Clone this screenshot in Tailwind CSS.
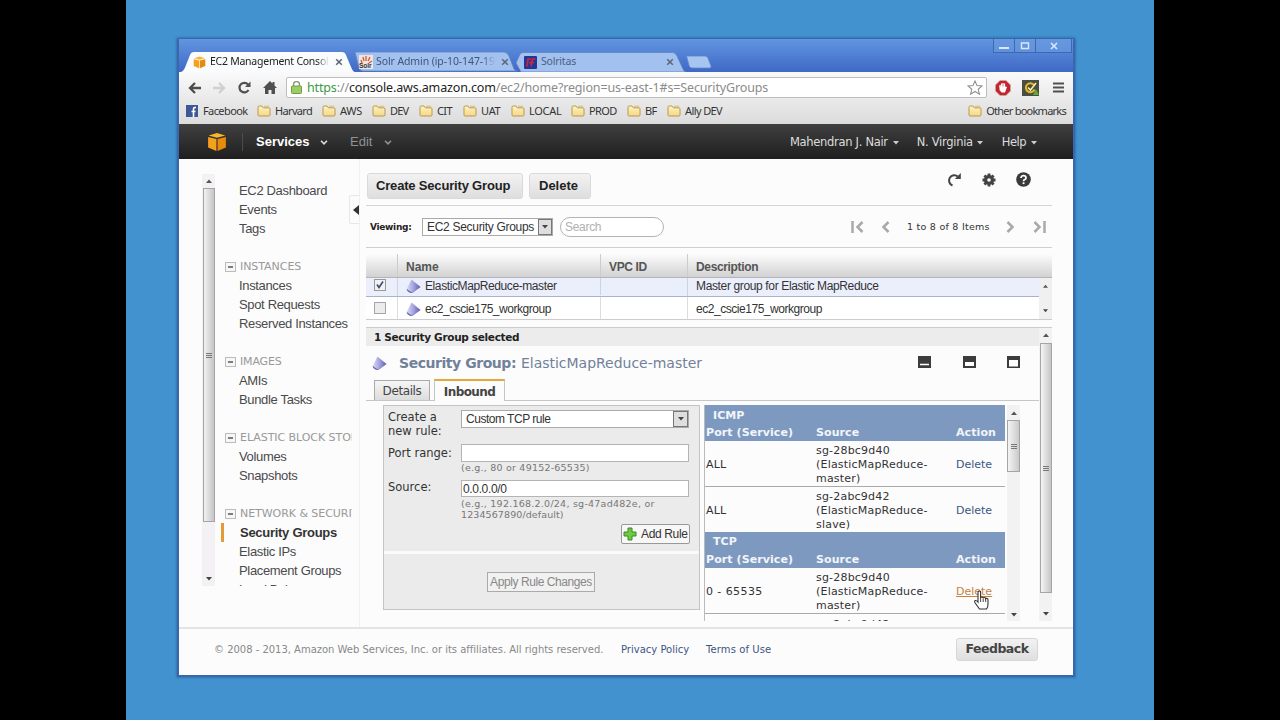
<!DOCTYPE html>
<html lang="en">
<head>
  <meta charset="UTF-8" />
  <meta name="viewport" content="width=device-width, initial-scale=1.0"/>
  <title>EC2 Management Console</title>
  <script src="https://cdn.jsdelivr.net/npm/@tailwindcss/browser@4"></script>
</head>
<body class="bg-black h-[720px] overflow-hidden flex justify-center font-['DejaVu_Sans',sans-serif] text-[#333]">

  <!-- shared icons -->
  <svg class="absolute w-0 h-0">
    <defs>
      <linearGradient id="cone-fill" x1="0" y1="0" x2="1" y2="0">
        <stop offset="0" stop-color="#dcdcf6"/><stop offset="0.5" stop-color="#a3a1dc"/><stop offset="1" stop-color="#5c5aac"/>
      </linearGradient>
      <linearGradient id="folder-fill" x1="0" y1="0" x2="0" y2="1">
        <stop offset="0" stop-color="#fdf3c0"/><stop offset="1" stop-color="#f3d88a"/>
      </linearGradient>
    </defs>
    <symbol id="folder" viewBox="0 0 14 12">
      <path d="M1 2.2Q1 1 2.2 1H5l1.4 1.8h5.4q1.2 0 1.2 1.2v6q0 1-1.2 1H2.2Q1 11 1 10z" fill="url(#folder-fill)" stroke="#bb984e" stroke-width="1"/>
      <path d="M7 1.2h5.2" stroke="#d8bd7c" stroke-width="1"/>
    </symbol>
    <symbol id="cone" viewBox="0 0 15 15">
      <path d="M5.5 .6 14.6 8 6 14Q1.2 13.4.7 10z" fill="url(#cone-fill)"/>
      <path d="M.7 10Q3.6 12 6 14 1.200 13.400.7 10z" fill="#6765b2"/>
      <path d="M.7 10Q2.400 12.600 6 13.200L14.600 8 6 14Q1.200 13.400.7 10z" fill="#7270ba"/>
    </symbol>
    <symbol id="cube" viewBox="0 0 18 18">
      <path d="M1 4.500 8.500 6.200V17L1 14z" fill="#f5a11c"/>
      <path d="M17 4.500 9.500 6.200V17L17 14z" fill="#e88b0c"/>
      <path d="M1.500 3.200 9 .8l7.500 2.400L9 5.200z" fill="#fbb62f"/>
    </symbol>
    <symbol id="minus" viewBox="0 0 11 10">
      <rect x=".5" y=".5" width="10" height="9" fill="#f6f6f6" stroke="#bbb"/>
      <path d="M3 5h5" stroke="#555" stroke-width="1.500"/>
    </symbol>
    <symbol id="up" viewBox="0 0 6 4"><path d="M0 4 3 .5 6 4z" fill="#555"/></symbol>
    <symbol id="down" viewBox="0 0 6 4"><path d="M0 0h6L3 3.500z" fill="#444"/></symbol>
    <symbol id="close" viewBox="0 0 8 8"><path d="M1.200 1.200 6.800 6.800M6.800 1.200 1.200 6.800" stroke="#5b6577" stroke-width="1.500"/></symbol>
    <symbol id="chevron" viewBox="0 0 8 5"><path d="M1 .8 4 3.800 7 .8" fill="none" stroke="currentColor" stroke-width="1.600"/></symbol>
    <symbol id="grip" viewBox="0 0 6 7"><path d="M0 1.500h6M0 3.500h6M0 5.500h6" stroke="#777" stroke-width="1"/></symbol>
  </svg>

  <div class="w-[1028px] h-[720px] bg-[#4292cf] pl-[51px] pt-[38px]">
    <!-- browser window -->
    <div class="w-[898px] h-[639px] border-x-2 border-b-2 border-t border-[#3a66ac] bg-[#fcfcfd] flex flex-col rounded-t-xs shadow-[0_0_2px_1px_#3577b5]">

      <!-- title bar with tabs -->
      <div class="relative h-[33px] shrink-0 bg-linear-to-b from-[#6196e0] to-[#4068c6] flex items-end pl-[2px]">
        <div class="relative w-[174px] h-[20px] flex items-center pl-[12px]">
          <svg class="absolute inset-0 w-[174px] h-[20px]" viewBox="0 0 174 20"><path d="M0 20Q3 19 5 13L9 3Q10 0 13 0H161Q164 0 165 3L170 15Q172 20 174 20z" fill="#fafbfc"/></svg>
          <svg class="relative w-[13px] h-[13px] shrink-0"><use href="#cube"/></svg>
          <span class="relative ml-[4px] w-[119px] overflow-hidden whitespace-nowrap text-[10.500px] font-['Noto_Sans',sans-serif] text-[#222] tracking-[-0.25px] mask-r-from-90%">EC2 Management Console</span>
          <svg class="relative ml-[6px] w-[8px] h-[8px]"><use href="#close"/></svg>
        </div>
        <div class="relative w-[160px] h-[20px] flex items-center pl-[4px]">
          <svg class="absolute -left-[2px] top-0 w-[166px] h-[20px]" viewBox="0 0 166 20"><path d="M2 0H151Q154 0 156 4L161 17Q162 19 164 19H10Q7 19 6 16z" fill="#a3c1ee" stroke="#5f83bd" stroke-width=".8"/></svg>
          <svg class="relative w-[14px] h-[14px] shrink-0" viewBox="0 0 14 14">
            <rect width="14" height="14" fill="#eee6e2"/>
            <path d="M3 8 2 5M5 6 4 2M7 6V1M9 6l2-4M10 8l3-2" stroke="#e0552b" stroke-width="1.300"/>
            <text x="0" y="12.500" font-size="6.500" font-weight="bold" font-family="Liberation Sans" fill="#333">Solr</text>
          </svg>
          <span class="relative ml-[3px] w-[119px] overflow-hidden whitespace-nowrap text-[10.500px] font-['Noto_Sans',sans-serif] text-[#3f5579] tracking-[-0.1px] mask-r-from-90%">Solr Admin (ip-10-147-19</span>
          <svg class="relative ml-[6px] w-[8px] h-[8px]"><use href="#close"/></svg>
        </div>
        <div class="relative w-[172px] h-[20px] flex items-center pl-[9px]">
          <svg class="absolute left-0 top-0 w-[172px] h-[20px]" viewBox="0 0 172 20"><path d="M1 11 5 2Q6 .4 9 .4H157Q160 0 162 4L168 17Q169 20 171 20H6z" fill="#a3c1ee" stroke="#5f83bd" stroke-width=".8"/></svg>
          <svg class="relative w-[13px] h-[13px] shrink-0" viewBox="0 0 13 13"><rect width="13" height="13" rx="1" fill="#22369c"/><path d="M4 2.500 3 10.500M4 3h3M8.500 2.500 7 10.500M8.500 3h3M5 6.500h5" stroke="#d3262e" stroke-width="1.600"/></svg>
          <span class="relative ml-[4px] w-[118px] text-[10.500px] font-['Noto_Sans',sans-serif] text-[#4a5f83] tracking-[-0.2px]">Solritas</span>
          <svg class="relative ml-[7px] w-[8px] h-[8px]"><use href="#close"/></svg>
        </div>
        <svg class="-ml-[2px] mb-[3px] w-[27px] h-[14px]" viewBox="0 0 27 14"><path d="M1.500 1H20Q22 1 23 3l3 8q.5 2-1.500 2H7Q5 13 4.200 11z" fill="#a6c5f0" stroke="#5f85c9" stroke-width=".8"/></svg>
        <!-- window buttons -->
        <div class="absolute right-[1px] top-0 flex h-[14px] border border-t-0 border-[#3d68b4] bg-[#6a9be0]/60 text-[#dbe8fb]">
          <div class="w-[21px] border-r border-[#3d68b4] flex justify-center items-center"><svg class="w-[10px] h-[8px]" viewBox="0 0 10 8"><path d="M0 6h10" stroke="currentColor" stroke-width="2"/></svg></div>
          <div class="w-[21px] border-r border-[#3d68b4] flex justify-center items-center"><svg class="w-[10px] h-[8px]" viewBox="0 0 10 8"><path d="M1.500 1h7v5.500h-7z" fill="none" stroke="currentColor" stroke-width="1.400"/></svg></div>
          <div class="w-[35px] flex justify-center items-center"><svg class="w-[8px] h-[8px]" viewBox="0 0 8 8"><path d="M1 1 7 7M7 1 1 7" stroke="currentColor" stroke-width="1.600"/></svg></div>
        </div>
      </div>

      <!-- toolbar -->
      <div class="h-[28px] shrink-0 bg-linear-to-b from-[#fafafa] to-[#e9e9ea] flex items-center pt-[3px] pl-[9px]">
        <svg class="w-[13px] h-[12px]" viewBox="0 0 13 12"><path d="M7 1 2 6l5 5M2 6h11" fill="none" stroke="#4c4c4c" stroke-width="2.300"/></svg>
        <svg class="w-[13px] h-[12px] ml-[12px]" viewBox="0 0 13 12"><path d="M6 1l5 5-5 5M11 6H0" fill="none" stroke="#d0d0d0" stroke-width="2.300"/></svg>
        <svg class="w-[13px] h-[13px] ml-[12px]" viewBox="0 0 13 13"><path d="M10.500 9A4.800 4.800 0 1 1 10 3.500" fill="none" stroke="#505050" stroke-width="2.200"/><path d="M12.500.500V6H7z" fill="#505050"/></svg>
        <svg class="w-[14px] h-[13px] ml-[12px]" viewBox="0 0 14 13"><path d="M7 0 0 7h2v6h3.500V9h3v4H12V7h2l-2.500-2.500V1h-2v1.500z" fill="#505050"/></svg>
        <div class="ml-[9px] w-[701px] h-[21px] bg-white border border-[#bdbdbd] rounded-xs flex items-center">
          <svg class="w-[11px] h-[13px] ml-[4px]" viewBox="0 0 11 13"><path d="M2.500 6V3.500a3 3 0 0 1 6 0V6" fill="none" stroke="#8d9b84" stroke-width="1.500"/><rect x=".5" y="5" width="10" height="7.500" rx="1" fill="#9ccc66" stroke="#6ca03e"/></svg>
          <span class="ml-[5px] text-[12.500px] leading-[18px] whitespace-nowrap font-['Noto_Sans',sans-serif] text-[#8b8b8b] tracking-[-0.15px]"><span class="text-[#3a9a42]">https</span>://<span class="text-[#222]">console.aws.amazon.com</span>/ec2/home?region=us-east-1#s=SecurityGroups</span>
          <svg class="w-[16px] h-[15px] ml-auto mr-[3px]" viewBox="0 0 16 15"><path d="M8 1l2 4.600 5 .4-3.800 3.300 1.200 4.800L8 11.500l-4.400 2.600 1.200-4.800L1 6l5-.4z" fill="#fff" stroke="#8f8f8f" stroke-width="1.100"/></svg>
        </div>
        <svg class="w-[16px] h-[16px] ml-[8px]" viewBox="0 0 16 16"><path d="M5 .5h6L15.500 5v6L11 15.500H5L.5 11V5z" fill="#c4242b" stroke="#c9a5a5" stroke-width=".8"/><path d="M5 7.500V5M6.500 7V3.500M8 7V3M9.500 7V3.500" stroke="#fff" stroke-width="1.200"/><path d="M4.500 6.500h6L12 7l-2 5.500H6.500L4.500 10z" fill="#fff"/></svg>
        <svg class="w-[17px] h-[16px] ml-[11px]" viewBox="0 0 17 16"><rect width="17" height="16" fill="#4b4d40"/><path d="M12 5A4.500 4.500 0 1 0 12.500 9.500" fill="none" stroke="#e5b92c" stroke-width="2"/><path d="M6 7.500 8.500 10 14 3" fill="none" stroke="#fff2b0" stroke-width="1.500"/><path d="M11 15l3-6 3 6z" fill="#5cab3f"/></svg>
        <svg class="w-[11px] h-[11px] ml-[14px]" viewBox="0 0 11 11"><path d="M0 1.500h11M0 5.500h11M0 9.500h11" stroke="#505050" stroke-width="2"/></svg>
      </div>

      <!-- bookmarks bar -->
      <div class="h-[24px] shrink-0 bg-linear-to-b from-[#e9e9ea] to-[#dcdcdd] flex items-center pl-[7px] pb-[2px] text-[11px] font-['Noto_Sans',sans-serif] text-[#333] whitespace-nowrap">
        <div class="w-[71px] flex items-center gap-[5px]"><svg class="w-[12px] h-[12px]" viewBox="0 0 12 12"><rect width="12" height="12" fill="#3e5796"/><path d="M10 2.500H8.800Q7.500 2.500 7.500 4v8M5.500 6.500h4" fill="none" stroke="#fff" stroke-width="1.600"/></svg><span class="tracking-[-0.6px]">Facebook</span></div>
        <div class="w-[65px] flex items-center gap-[4px]"><svg class="w-[14px] h-[12px]"><use href="#folder"/></svg><span class="tracking-[-0.65px]">Harvard</span></div>
        <div class="w-[50px] flex items-center gap-[4px]"><svg class="w-[14px] h-[12px]"><use href="#folder"/></svg><span class="tracking-[-0.3px]">AWS</span></div>
        <div class="w-[47px] flex items-center gap-[4px]"><svg class="w-[14px] h-[12px]"><use href="#folder"/></svg><span class="tracking-[-0.8px]">DEV</span></div>
        <div class="w-[44px] flex items-center gap-[4px]"><svg class="w-[14px] h-[12px]"><use href="#folder"/></svg><span class="tracking-[-0.6px]">CIT</span></div>
        <div class="w-[48px] flex items-center gap-[4px]"><svg class="w-[14px] h-[12px]"><use href="#folder"/></svg><span class="tracking-[-0.3px]">UAT</span></div>
        <div class="w-[60px] flex items-center gap-[4px]"><svg class="w-[14px] h-[12px]"><use href="#folder"/></svg><span class="tracking-[-0.3px]">LOCAL</span></div>
        <div class="w-[56px] flex items-center gap-[4px]"><svg class="w-[14px] h-[12px]"><use href="#folder"/></svg><span class="tracking-[-0.6px]">PROD</span></div>
        <div class="w-[40px] flex items-center gap-[4px]"><svg class="w-[14px] h-[12px]"><use href="#folder"/></svg><span class="tracking-[-0.6px]">BF</span></div>
        <div class="flex items-center gap-[4px]"><svg class="w-[14px] h-[12px]"><use href="#folder"/></svg><span class="tracking-[-0.6px]">Ally DEV</span></div>
        <div class="ml-auto mr-[7px] flex items-center gap-[4px]"><svg class="w-[14px] h-[12px]"><use href="#folder"/></svg><span class="tracking-[-0.75px]">Other bookmarks</span></div>
      </div>

      <!-- console navigation -->
      <div class="h-[35px] shrink-0 bg-linear-to-b from-[#404040] to-[#1f1f1f] flex items-center text-[#ddd] whitespace-nowrap">
        <svg class="w-[20px] h-[20px] ml-[28px]"><use href="#cube"/></svg>
        <div class="ml-[15px] w-px h-[18px] bg-[#4c4c4c]"></div>
        <span class="ml-[13px] w-[64px] text-[13px] font-bold font-['Liberation_Sans',sans-serif] text-white">Services</span>
        <svg class="w-[8px] h-[5px] mt-[2px]"><use href="#chevron"/></svg>
        <span class="ml-[22px] w-[34px] pt-px text-[13px] font-['Liberation_Sans',sans-serif] text-[#929292]">Edit</span>
        <svg class="w-[8px] h-[5px] mt-[2px] text-[#929292]"><use href="#chevron"/></svg>
        <div class="ml-auto mr-[36px] pt-[3px] flex items-center text-[11.500px]">
          <span class="tracking-[-0.3px]">Mahendran J. Nair</span><svg class="w-[6px] h-[4px] ml-[5px]" viewBox="0 0 6 4"><path d="M0 0h6L3 3.500z" fill="#ccc"/></svg>
          <span class="ml-[18px] tracking-[-0.3px]">N. Virginia</span><svg class="w-[6px] h-[4px] ml-[4px]" viewBox="0 0 6 4"><path d="M0 0h6L3 3.500z" fill="#ccc"/></svg>
          <span class="ml-[19px] tracking-[-0.5px]">Help</span><svg class="w-[6px] h-[4px] ml-[5px]" viewBox="0 0 6 4"><path d="M0 0h6L3 3.500z" fill="#ccc"/></svg>
        </div>
      </div>

      <!-- page -->
      <div class="h-[470px] shrink-0 flex border-b-2 border-[#e4e4e4]">

        <!-- sidebar -->
        <div class="w-[181px] border-r border-[#f0f0f0] flex pl-[23px] pt-[15px] relative">
          <div class="w-[13px] h-[412px] bg-[#f3f1f3] flex flex-col items-center">
            <svg class="w-[6px] h-[4px] my-[5px]"><use href="#up"/></svg>
            <div class="w-[12px] h-[334px] border border-[#a5a3a5] bg-linear-to-r from-[#f2f2f2] to-[#c6c4c6] flex items-center justify-center"><svg class="w-[6px] h-[7px]"><use href="#grip"/></svg></div>
            <svg class="w-[6px] h-[4px] mt-auto mb-[5px]"><use href="#down"/></svg>
          </div>
          <div class="ml-[6px] w-[131px] h-[412px] pt-[7px] overflow-hidden whitespace-nowrap font-['Liberation_Sans',sans-serif] text-[13px] leading-[19px] text-[#4a4a4a] tracking-[-0.34px]">
            <div class="pl-[18px]">EC2 Dashboard</div>
            <div class="pl-[18px]">Events</div>
            <div class="pl-[18px]">Tags</div>
            <div class="mt-[19px] flex items-center gap-[4px] text-[11px] font-['DejaVu_Sans',sans-serif] text-[#999] tracking-[-0.05px]"><svg class="w-[11px] h-[10px] ml-[4px] shrink-0"><use href="#minus"/></svg>INSTANCES</div>
            <div class="pl-[18px]">Instances</div>
            <div class="pl-[18px]">Spot Requests</div>
            <div class="pl-[18px]">Reserved Instances</div>
            <div class="mt-[19px] flex items-center gap-[4px] text-[11px] font-['DejaVu_Sans',sans-serif] text-[#999] tracking-[-0.15px]"><svg class="w-[11px] h-[10px] ml-[4px] shrink-0"><use href="#minus"/></svg>IMAGES</div>
            <div class="pl-[18px]">AMIs</div>
            <div class="pl-[18px]">Bundle Tasks</div>
            <div class="mt-[19px] flex items-center gap-[4px] text-[11px] font-['DejaVu_Sans',sans-serif] text-[#999] tracking-[-0.05px]"><svg class="w-[11px] h-[10px] ml-[4px] shrink-0"><use href="#minus"/></svg>ELASTIC BLOCK STORE</div>
            <div class="pl-[18px]">Volumes</div>
            <div class="pl-[18px]">Snapshots</div>
            <div class="mt-[19px] flex items-center gap-[4px] text-[11px] font-['DejaVu_Sans',sans-serif] text-[#999] tracking-[-0.05px]"><svg class="w-[11px] h-[10px] ml-[4px] shrink-0"><use href="#minus"/></svg>NETWORK &amp; SECURITY</div>
            <div class="border-l-3 border-[#e39b3a] pl-[16px] font-bold text-[#333] tracking-[-0.28px]">Security Groups</div>
            <div class="pl-[18px]">Elastic IPs</div>
            <div class="pl-[18px]">Placement Groups</div>
            <div class="pl-[18px]">Load Balancers</div>
          </div>
          <!-- collapse handle -->
          <div class="absolute right-[0px] top-[36px] w-[10px] h-[29px] bg-[#fcfcfd] border border-r-0 border-[#e8e8e8] rounded-l-xs flex items-center justify-end"><svg class="w-[6px] h-[10px]" viewBox="0 0 6 10"><path d="M6 0v10L0 5z" fill="#333"/></svg></div>
        </div>

        <!-- main column -->
        <div class="ml-[6px] w-[686px] h-[462px] flex flex-col overflow-hidden">
          <div class="h-[47px] shrink-0 border-b border-[#d4d4d4] flex items-center pt-[7px] pl-px">
            <div class="w-[156px] h-[26px] rounded-[3px] border border-[#dadada] bg-linear-to-b from-[#f2f2f2] to-[#dedede] flex items-center pl-[8px] whitespace-nowrap font-['Liberation_Sans',sans-serif] font-bold text-[13px] text-[#222] tracking-[-0.18px]">Create Security Group</div>
            <div class="ml-[6px] w-[62px] h-[26px] rounded-[3px] border border-[#dadada] bg-linear-to-b from-[#f2f2f2] to-[#dedede] flex items-center pl-[9px] font-['Liberation_Sans',sans-serif] font-bold text-[13px] text-[#222]">Delete</div>
            <div class="ml-auto mr-[21px] mb-[12px] flex items-center gap-[20px]">
              <svg class="w-[15px] h-[15px]" viewBox="0 0 15 15"><path d="M5.500 13.500A5.300 5.300 0 1 1 10.800 4.500" fill="none" stroke="#444" stroke-width="2"/><path d="M13.800 1V7H7.800z" fill="#444"/></svg>
              <svg class="w-[14px] h-[14px]" viewBox="0 0 14 14"><path d="M7 .5v13M.5 7h13M2.400 2.400l9.200 9.200M11.600 2.400l-9.200 9.200" stroke="#444" stroke-width="2.800"/><circle cx="7" cy="7" r="3.600" fill="none" stroke="#444" stroke-width="3"/><circle cx="7" cy="7" r="1.800" fill="#fcfcfd"/></svg>
              <svg class="w-[15px] h-[15px]" viewBox="0 0 15 15"><circle cx="7.500" cy="7.500" r="7.300" fill="#3a3a3a"/><path d="M5 6Q5 3.700 7.500 3.700T10 5.900Q10 7 8.700 7.600 7.500 8.200 7.500 9.300" fill="none" stroke="#fff" stroke-width="1.700"/><rect x="6.600" y="10.300" width="1.900" height="1.800" fill="#fff"/></svg>
            </div>
          </div>

          <div class="h-[42px] shrink-0 border-b border-[#cfcfcf] flex items-center pl-[4px] whitespace-nowrap">
            <span class="w-[52px] text-[9px] font-bold text-[#222] pt-[2px] tracking-[-0.3px]">Viewing:</span>
            <div class="w-[131px] h-[18px] bg-white border border-[#aaa] flex items-center text-[12px] font-['Liberation_Sans',sans-serif] text-[#333]"><span class="pl-[4px] tracking-[-0.3px]">EC2 Security Groups</span><div class="ml-auto w-[14px] h-[16px] bg-[#dedede] border border-[#777] flex items-center justify-center"><svg class="w-[6px] h-[4px]"><use href="#down"/></svg></div></div>
            <div class="ml-[7px] w-[104px] h-[20px] rounded-full bg-white border border-[#b3b3b3] flex items-center pl-[4px] text-[12px] font-['Liberation_Sans',sans-serif] text-[#b0b0b0] tracking-[-0.3px]">Search</div>
            <div class="ml-auto mr-[6px] flex items-center text-[#a9a9a9]">
              <svg class="w-[13px] h-[12px]" viewBox="0 0 13 12"><path d="M1.500 0v12M11.500 1l-5 5 5 5" fill="none" stroke="currentColor" stroke-width="2.500"/></svg>
              <svg class="w-[9px] h-[12px] ml-[17px]" viewBox="0 0 9 12"><path d="M7.500 1l-5 5 5 5" fill="none" stroke="currentColor" stroke-width="2.500"/></svg>
              <span class="ml-[17px] w-[83px] text-[9.500px] text-[#333] pt-px tracking-[0.25px]">1 to 8 of 8 Items</span>
              <svg class="w-[9px] h-[12px] ml-[16px]" viewBox="0 0 9 12"><path d="M1.500 1l5 5-5 5" fill="none" stroke="currentColor" stroke-width="2.500"/></svg>
              <svg class="w-[13px] h-[12px] ml-[18px]" viewBox="0 0 13 12"><path d="M1.500 1l5 5-5 5M11.500 0v12" fill="none" stroke="currentColor" stroke-width="2.500"/></svg>
            </div>
          </div>

          <!-- groups table -->
          <div class="mt-[6px] h-[24px] shrink-0 border-b border-[#b5b5b5] bg-linear-to-b from-[#fcfcfc] to-[#d2d2d2] grid grid-cols-[32px_203px_87px_1fr] items-center font-['Liberation_Sans',sans-serif] font-bold text-[12px] text-[#555] leading-[19px] tracking-[-0.35px]">
            <div class="h-[23px] border-r border-[#ccc]"></div>
            <div class="h-[23px] border-r border-[#ccc] pl-[8px] pt-[4px] tracking-normal">Name</div>
            <div class="h-[23px] border-r border-[#ccc] pl-[8px] pt-[4px]">VPC ID</div>
            <div class="pl-[8px] h-[23px] pt-[4px]">Description</div>
          </div>
          <div class="h-[42px] shrink-0 flex border-b border-[#ccc] font-['Liberation_Sans',sans-serif] text-[12px] text-[#333] whitespace-nowrap tracking-[-0.36px]">
            <div class="w-[673px]">
              <div class="h-[19px] border-b border-[#a9b3c4] bg-[#ebeffb] grid grid-cols-[32px_203px_87px_1fr] leading-[17px]">
                <div class="border-r border-[#ccd3e4] pl-[8px] pt-[1px]"><svg class="w-[12px] h-[12px]" viewBox="0 0 12 12"><rect x=".5" y=".5" width="11" height="11" fill="#f1f1f1" stroke="#999"/><path d="M3 5.500 5 8.500 9 2.500" fill="none" stroke="#3f4a75" stroke-width="1.600"/></svg></div>
                <div class="border-r border-[#ccd3e4] pl-[8px] h-[17px] flex items-center gap-[4px] tracking-[-0.4px]"><svg class="w-[15px] h-[15px]"><use href="#cone"/></svg><span>ElasticMapReduce-master</span></div>
                <div class="border-r border-[#ccd3e4]"></div>
                <div class="pl-[8px]">Master group for Elastic MapReduce</div>
              </div>
              <div class="h-[22px] bg-white grid grid-cols-[32px_203px_87px_1fr] leading-[25px] tracking-[-0.46px]">
                <div class="border-r border-[#ddd] pl-[8px] pt-[5px]"><svg class="w-[12px] h-[12px]" viewBox="0 0 12 12"><rect x=".5" y=".5" width="11" height="11" fill="#ececec" stroke="#a5a5a5"/></svg></div>
                <div class="border-r border-[#ddd] pl-[8px] h-[22px] flex items-center gap-[4px]"><svg class="w-[15px] h-[15px] mt-[2px]"><use href="#cone"/></svg><span class="pt-[2px]">ec2_cscie175_workgroup</span></div>
                <div class="border-r border-[#ddd]"></div>
                <div class="pl-[8px] h-[22px]">ec2_cscie175_workgroup</div>
              </div>
            </div>
            <div class="w-[13px] bg-[#f0f0f0] flex flex-col items-center justify-between py-[6px]"><svg class="w-[5px] h-[4px]"><use href="#up"/></svg><svg class="w-[5px] h-[4px]"><use href="#down"/></svg></div>
          </div>

          <!-- details pane -->
          <div class="mt-[7px] flex h-[294px] shrink-0 overflow-hidden border-t border-[#ccc]">
            <div class="w-[673px] flex flex-col">
              <div class="h-[18px] shrink-0 bg-[#ececec] pl-[8px] text-[10.500px] leading-[19px] font-bold text-[#222] tracking-[-0.32px]">1 Security Group selected</div>
              <div class="h-[34px] shrink-0 flex items-center pl-[6px] text-[14px] whitespace-nowrap text-[#71819a]">
                <svg class="w-[15px] h-[15px]"><use href="#cone"/></svg>
                <span class="ml-[12px] w-[122px] font-bold tracking-[-0.45px]">Security Group:</span><span class="tracking-[-0.02px]">ElasticMapReduce-master</span>
                <div class="ml-auto mr-[19px] mt-[-2px] flex gap-[32px]">
                  <svg class="w-[13px] h-[12px]" viewBox="0 0 13 12"><rect width="13" height="12" fill="#3c3c3c"/><path d="M2 8.500h9" stroke="#fff" stroke-width="1.500"/></svg>
                  <svg class="w-[13px] h-[12px]" viewBox="0 0 13 12"><rect width="13" height="12" fill="#3c3c3c"/><rect x="2" y="6" width="9" height="4" fill="#fff"/></svg>
                  <svg class="w-[13px] h-[12px] -ml-px" viewBox="0 0 13 12"><rect width="13" height="12" fill="#3c3c3c"/><rect x="2" y="4" width="9" height="6.500" fill="#fff"/></svg>
                </div>
              </div>
              <div class="h-[21px] shrink-0 border-b border-[#c6c6c6] flex items-end pl-[8px] text-[12px] text-[#444]">
                <div class="w-[56px] h-[20px] border border-b-0 border-[#aaa] bg-linear-to-b from-[#f6f6f6] to-[#dcdcdc] flex items-center justify-center tracking-[-0.4px]">Details</div>
                <div class="ml-[4px] w-[71px] h-[22px] -mb-px border-x border-[#c6c6c6] border-t-2 border-t-[#e3a93c] bg-[#fcfcfd] flex items-center justify-center font-bold tracking-[-0.6px] pt-[1px]">Inbound</div>
              </div>

              <div class="pt-[4px] pl-[17px] flex">
                <!-- new rule form -->
                <div class="w-[317px] h-[205px] border border-[#c4c4c4] bg-[#ebebeb] text-[11.500px] text-[#333] flex flex-col">
                  <div class="h-[145px] pl-[4px] pt-[4px]">
                    <div class="flex h-[33px]"><span class="w-[73px] leading-[14px]">Create a<br>new rule:</span><div class="w-[228px] h-[18px] bg-white border border-[#aaa] flex items-center font-['Liberation_Sans',sans-serif] text-[12px]"><span class="pl-[4px] tracking-[-0.48px]">Custom TCP rule</span><div class="ml-auto w-[15px] h-[16px] border border-[#777] bg-[#dedede] flex items-center justify-center"><svg class="w-[6px] h-[4px]"><use href="#down"/></svg></div></div></div>
                    <div class="flex h-[37px]"><span class="w-[73px] leading-[20px] whitespace-nowrap">Port range:</span><div><div class="mt-px w-[228px] h-[18px] bg-white border border-[#b4b4b4]"></div><div class="text-[9.500px] leading-[12px] text-[#777] tracking-[0.22px]">(e.g., 80 or 49152-65535)</div></div></div>
                    <div class="flex h-[46px]"><span class="w-[73px] leading-[15px]">Source:</span><div><div class="w-[228px] h-[17px] bg-white border border-[#b4b4b4] pl-[1px] font-['Liberation_Sans',sans-serif] text-[12px] leading-[17px] tracking-[-0.35px]">0.0.0.0/0</div><div class="text-[9.500px] leading-[11px] pt-[1px] text-[#777] whitespace-nowrap tracking-[0.24px]">(e.g., 192.168.2.0/24, sg-47ad482e, or<br><span class="tracking-[0.1px]">1234567890/default)</span></div></div></div>
                    <div class="ml-[233px] -mt-[2px] w-[69px] h-[20px] border border-[#999] rounded-xs bg-[#f7f7f7] flex items-center pl-px gap-[4px] whitespace-nowrap font-['Liberation_Sans',sans-serif] text-[12px] tracking-[-0.35px]"><svg class="w-[14px] h-[14px]" viewBox="0 0 14 14"><path d="M5 1h4v4h4v4H9v4H5V9H1V5h4z" fill="#6ecb3f" stroke="#3b8a25"/></svg>Add Rule</div>
                  </div>
                  <div class="h-[3px] bg-[#fafafa]"></div>
                  <div class="flex-1 pt-[18px] pl-[103px]"><div class="w-[108px] h-[20px] border border-[#aaa] bg-[#f1f1f1] flex items-center justify-center whitespace-nowrap font-['Liberation_Sans',sans-serif] text-[12px] text-[#888] tracking-[-0.42px]">Apply Rule Changes</div></div>
                </div>

                <!-- rules -->
                <div class="ml-[4px] w-[301px] h-[217px] overflow-hidden border-l border-[#bbb] text-[11px] leading-[14px] text-[#333] tracking-[0.2px]">
                  <div class="h-[36px] bg-[#7e99c0] text-white/90 font-bold grid grid-cols-[110px_140px_1fr] gap-y-[2px] pt-[4px] pl-[1px] whitespace-nowrap tracking-[0.08px]"><span class="col-span-3 pl-[7px]">ICMP</span><span>Port (Service)</span><span>Source</span><span>Action</span></div>
                  <div class="h-[46px] border-b border-[#aaa] grid grid-cols-[110px_140px_1fr] items-center pt-[3px] pl-[1px]"><span>ALL</span><span>sg-28bc9d40<br>(ElasticMapReduce-<br>master)</span><span class="text-[#3d5681] tracking-normal">Delete</span></div>
                  <div class="h-[45px] grid grid-cols-[110px_140px_1fr] items-center pt-[3px] pl-[1px]"><span>ALL</span><span>sg-2abc9d42<br>(ElasticMapReduce-<br>slave)</span><span class="text-[#3d5681] tracking-normal">Delete</span></div>
                  <div class="h-[36px] bg-[#7e99c0] text-white/90 font-bold grid grid-cols-[110px_140px_1fr] gap-y-[3px] pt-[3px] pl-[1px] whitespace-nowrap tracking-[0.08px]"><span class="col-span-3 pl-[7px]">TCP</span><span>Port (Service)</span><span>Source</span><span>Action</span></div>
                  <div class="h-[46px] border-b border-[#aaa] grid grid-cols-[110px_140px_1fr] items-center pt-[3px] pl-[1px]"><span class="tracking-[0.42px]">0 - 65535</span><span>sg-28bc9d40<br>(ElasticMapReduce-<br>master)</span><span class="relative text-[#c9803c] underline tracking-normal">Delete
                    <svg class="absolute left-[17px] top-[5px] w-[17px] h-[20px]" viewBox="0 0 17 20"><path d="M5 12V2.500q0-1.500 1.300-1.500T7.600 2.500V8q0-1 1.300-1t1.300 1.200q.2-.8 1.300-.7 1.200.1 1.200 1.300.4-.6 1.300-.4 1 .2 1 1.500v4Q15 17.500 13.500 19H6.500L2.200 13Q1 11 2.300 10.500q1-.3 2.700 1.500z" fill="#fff" stroke="#333" stroke-width="1.100"/><path d="M7.600 8v4M10.200 8.500v3.500M12.700 9v3" stroke="#333" stroke-width=".9"/></svg></span></div>
                  <div class="pl-[111px] pt-[4px]">sg-2abc9d42</div>
                </div>
                <!-- rules scrollbar -->
                <div class="ml-[2px] w-[13px] h-[217px] bg-[#f2f2f2] flex flex-col items-center">
                  <svg class="w-[6px] h-[4px] mt-[6px] mb-[5px]"><use href="#up"/></svg>
                  <div class="w-[13px] h-[52px] border border-[#a5a5a5] bg-linear-to-r from-[#f4f4f4] to-[#cacaca] flex items-center justify-center"><svg class="w-[6px] h-[7px]"><use href="#grip"/></svg></div>
                  <svg class="w-[6px] h-[4px] mt-auto mb-[5px]"><use href="#down"/></svg>
                </div>
              </div>
            </div>
            <div class="w-[13px] h-[293px] bg-[#f2f2f2] flex flex-col items-center">
              <svg class="w-[6px] h-[4px] mt-[5px] mb-[6px]"><use href="#up"/></svg>
              <div class="w-[12px] h-[250px] border border-[#a5a5a5] bg-linear-to-r from-[#f4f4f4] to-[#c6c6c6] flex items-center justify-center"><svg class="w-[6px] h-[7px]"><use href="#grip"/></svg></div>
              <svg class="w-[6px] h-[4px] mt-auto mb-[5px]"><use href="#down"/></svg>
            </div>
          </div>
        </div>
      </div>

      <!-- footer -->
      <div class="flex-1 flex items-center pl-[35px] pb-[6px] text-[10px] text-[#888] whitespace-nowrap">
        <span class="w-[407px] tracking-[-0.02px]">© 2008 - 2013, Amazon Web Services, Inc. or its affiliates. All rights reserved.</span>
        <span class="w-[85px] text-[#3d5681]">Privacy Policy</span>
        <span class="text-[#3d5681] tracking-[0.1px]">Terms of Use</span>
        <div class="ml-auto mr-[35px] w-[82px] h-[23px] rounded-[3px] border border-[#d6d6d6] bg-linear-to-b from-[#f2f2f2] to-[#dfdfdf] flex items-center justify-center font-bold text-[12.500px] text-[#444] tracking-[-0.5px]">Feedback</div>
      </div>
    </div>
  </div>
</body>
</html>
